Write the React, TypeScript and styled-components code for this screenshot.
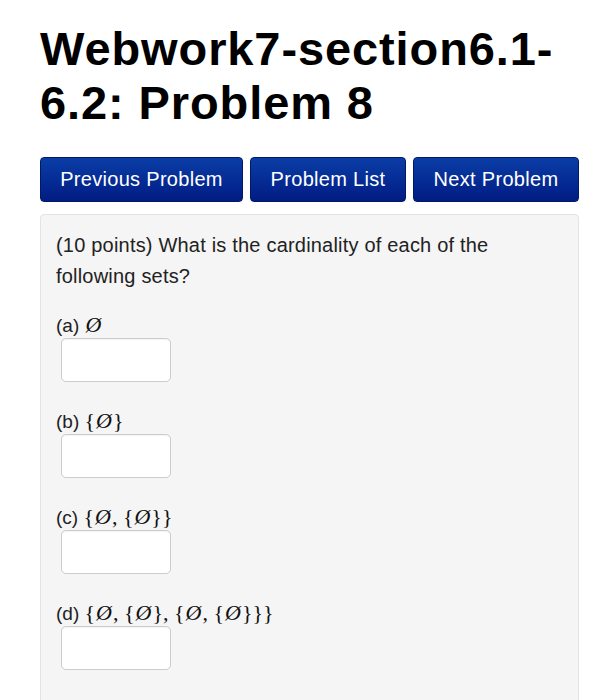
import styled, { createGlobalStyle } from 'styled-components'

const GlobalStyle = createGlobalStyle`
	body {
		margin: 0;
		background: #fff;
		font-family: 'Liberation Sans', Arial, sans-serif;
		color: #222;
	}
`

const parts = [
	{ label: '(a)', math: 'Ø' },
	{ label: '(b)', math: '{Ø}' },
	{ label: '(c)', math: '{Ø, {Ø}}' },
	{ label: '(d)', math: '{Ø, {Ø}, {Ø, {Ø}}}' }
]

// the empty set glyph is slanted in the original, braces are upright
const renderMath = (s: string) =>
	s.split('').map((ch, i) => (ch === 'Ø' ? <Empty key={i}>Ø</Empty> : ch))

export default function App(): JSX.Element {
	return (
		<Page>
			<GlobalStyle />
			<Title>Webwork7-section6.1-6.2: Problem 8</Title>
			<Nav>
				<NavButton>Previous Problem</NavButton>
				<NavButton>Problem List</NavButton>
				<NavButton>Next Problem</NavButton>
			</Nav>
			<Panel>
				<Intro>(10 points) What is the cardinality of each of the following sets?</Intro>
				{parts.map((p) => (
					<Part key={p.label}>
						<Label>
							{p.label} <Math>{renderMath(p.math)}</Math>
						</Label>
						<Answer type="text" />
					</Part>
				))}
			</Panel>
		</Page>
	)
}

const Page = styled.div`
	padding: 22px 27px 0 40px;
	height: 700px;
	box-sizing: border-box;
	overflow: hidden;
`

const Title = styled.h1`
	margin: 0 0 27px;
	font-size: 47px;
	line-height: 54px;
	font-weight: 700;
	color: #000;
	letter-spacing: 0.9px;
	width: 539px;
`

const Nav = styled.div`
	display: flex;
	gap: 7px;
	margin-bottom: 12px;
`

const NavButton = styled.button`
	height: 45px;
	padding: 0;
	border: 1px solid #001a66;
	border-radius: 4px;
	background: linear-gradient(to bottom, #0b3da6, #001c84);
	color: #fff;
	font-family: 'Liberation Sans', Arial, sans-serif;
	font-size: 20px;
	letter-spacing: 0.3px;
	cursor: pointer;
	&:nth-child(1) {
		width: 203px;
	}
	&:nth-child(2) {
		width: 156px;
	}
	&:nth-child(3) {
		width: 166px;
	}
`

const Panel = styled.div`
	background: #f5f5f5;
	border: 1px solid #e3e3e3;
	border-radius: 4px;
	padding: 15px 20px 40px 15px;
	height: 600px;
	box-sizing: border-box;
`

const Intro = styled.p`
	margin: 0 0 21px;
	font-size: 20px;
	line-height: 31px;
	letter-spacing: 0.2px;
	color: #222;
`

const Part = styled.div`
	margin-bottom: 27px;
`

const Label = styled.div`
	font-size: 19px;
	line-height: 24px;
	color: #222;
	margin-bottom: 0;
`

const Math = styled.span`
	font-family: 'Liberation Serif', 'DejaVu Serif', serif;
	font-size: 22px;
	color: #111;
`

const Empty = styled.span`
	font-style: italic;
	padding: 0 1px;
`

const Answer = styled.input`
	display: block;
	margin-left: 5px;
	width: 110px;
	height: 44px;
	box-sizing: border-box;
	border: 1px solid #ccc;
	border-radius: 5px;
	background: #fff;
	box-shadow: inset 0 1px 1px rgba(0, 0, 0, 0.05);
`
